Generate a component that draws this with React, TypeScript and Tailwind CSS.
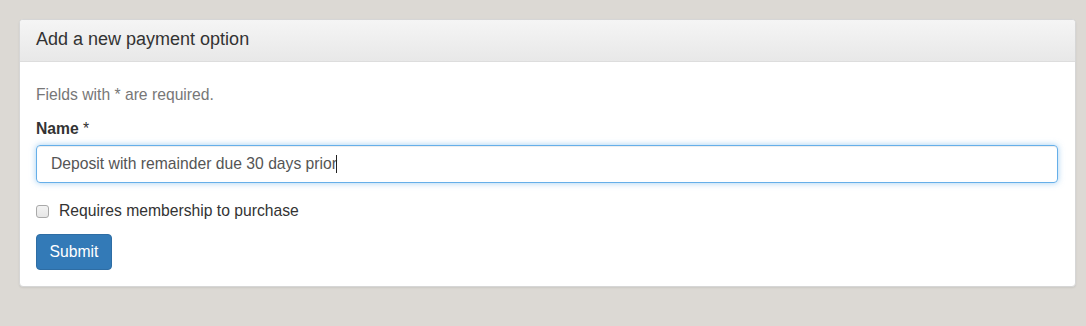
export default function App() {
  return (
    <div className="min-h-[326px] w-full bg-[#dcd9d4] pt-[19px] pl-[19px] pr-[10px] font-['Liberation_Sans',Arial,sans-serif] text-[#333]">
      <div className="w-[1057px] rounded-[4px] border border-[#d6d6d6] bg-white shadow-[0_1px_2px_rgba(0,0,0,0.08)]">
        <div className="h-[42px] rounded-t-[3px] border-b border-[#dddddd] bg-gradient-to-b from-[#f5f5f5] to-[#e8e8e8] pl-[16px] pt-[9px]">
          <h3 className="text-[18px] leading-[20px] text-[#333]">Add a new payment option</h3>
        </div>

        <div className="px-[16px] pt-[22px] pb-[16px] text-[15.7px] leading-[22px]">
          <p className="text-[#777]">Fields with * are required.</p>

          <label className="mt-[12px] block">
            <span className="font-bold">Name</span> *
          </label>

          <div className="mt-[5px] flex h-[38px] w-[1022px] items-center rounded-[4px] border border-[#66afe9] pl-[14px] text-[#555] shadow-[inset_0_1px_1px_rgba(0,0,0,0.075),0_0_6px_rgba(102,175,233,0.6)]">
            <span>Deposit with remainder due 30 days prior</span>
            <span className="ml-[-1px] h-[18px] w-px bg-[#222]" />
          </div>

          <div className="mt-[17px] flex items-center">
            <span className="h-[13px] w-[13px] rounded-[3px] border border-[#a9a9a9] bg-gradient-to-b from-[#f3f3f3] to-[#e6e6e6]" />
            <span className="ml-[10px]">Requires membership to purchase</span>
          </div>

          <button className="mt-[12px] flex h-[36px] w-[76px] items-center justify-center rounded-[4px] border border-[#2e6da4] bg-[#337ab7] text-white">
            Submit
          </button>
        </div>
      </div>
    </div>
  );
}
